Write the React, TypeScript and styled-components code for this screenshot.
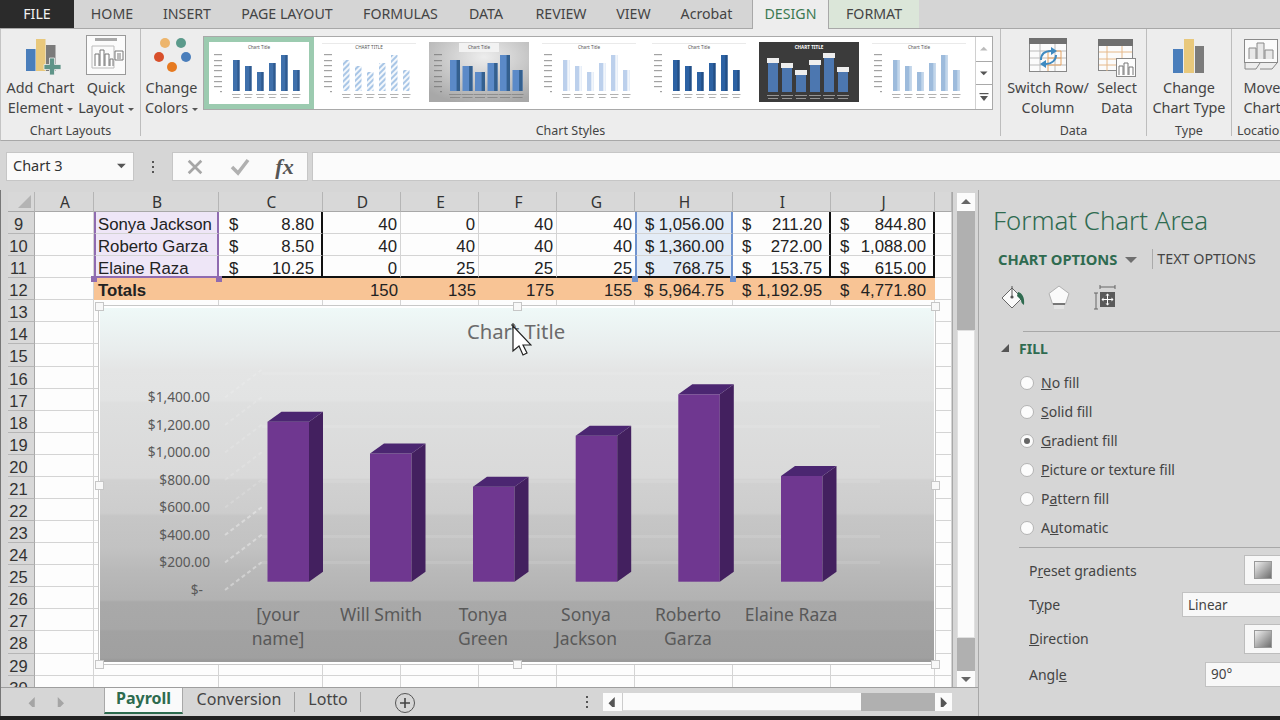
import React from "react";
import styled, { createGlobalStyle } from "styled-components";

const UI = `"Noto Sans", "Open Sans", sans-serif`;
const CELL = `"Liberation Sans", Arial, sans-serif`;

const Global = createGlobalStyle`
  html, body { margin: 0; padding: 0; overflow: hidden; background: #d6d6d6; }
  * { box-sizing: border-box; }
`;

const Root = styled.div`
  width: 1280px; height: 720px; display: flex; flex-direction: column; overflow: hidden;
  background: #d6d6d6; font-family: ${UI}; color: #444;
`;

/* ---------- tabs ---------- */
const TabBar = styled.div`
  height: 29px; flex: none; display: flex; align-items: stretch; background: #d5d5d5;
  border-bottom: 1px solid #a8a8a8;
`;
const Tab = styled.div<{ $w: number; $kind?: "file" | "design" | "format" }>`
  width: ${(p) => p.$w}px; flex: none; display: flex; align-items: center; justify-content: center;
  font-size: 14.2px; white-space: nowrap; color: #444; padding-bottom: 2px;
  ${(p) => p.$kind === "file" && "background:#2b2b2b;color:#f2f2f2;"}
  ${(p) => p.$kind === "design" && "background:#ededed;color:#3c7a52;height:29px;border-left:1px solid #a8a8a8;border-right:1px solid #a8a8a8;margin-left:5px;"}
  ${(p) => p.$kind === "format" && "background:#dbe6d9;color:#444;"}
`;

/* ---------- ribbon ---------- */
const Ribbon = styled.div`
  height: 112px; flex: none; display: flex; background: #ededed; border-bottom: 1px solid #a8a8a8;
  border-left: 1px solid #c4c4c4; overflow: hidden;
`;
const Group = styled.div<{ $w: number; $last?: boolean }>`
  width: ${(p) => p.$w}px; flex: none; position: relative; display: flex; flex-direction: column;
  height: 107px;
  ${(p) => !p.$last && "border-right: 1px solid #bdbdbd;"}
`;
const GroupBody = styled.div<{ $pad?: number }>`
  height: 93px; flex: none; display: flex; align-items: flex-start; padding-left: ${(p) => p.$pad ?? 0}px;
`;
const GroupLabel = styled.div`
  height: 18px; flex: none; text-align: center; font-size: 12.5px; line-height: 18px; color: #444; white-space: nowrap;
`;
const RibbonBtn = styled.div<{ $w: number }>`
  width: ${(p) => p.$w}px; flex: none; display: flex; flex-direction: column; align-items: center;
`;
const BtnIcon = styled.div`
  height: 49px; display: flex; align-items: flex-start; justify-content: center; padding-top: 10px;
`;
const BtnLabel = styled.div`
  font-size: 14.4px; line-height: 20px; color: #444; text-align: center; white-space: nowrap;
`;
const Caret = styled.span`
  display: inline-block; width: 0; height: 0; margin-left: 4px; vertical-align: 2px;
  border-left: 3px solid transparent; border-right: 3px solid transparent; border-top: 3px solid #555;
`;
const Gallery = styled.div`
  margin: 7px 0 0 1px; width: 790px; height: 74px; display: flex; background: #fff;
  border: 1px solid #a9a9a9;
`;
const Thumb = styled.div<{ $sel?: boolean }>`
  width: 110px; height: 72px; flex: none; border: 5px solid ${(p) => (p.$sel ? "#9ccbb0" : "transparent")};
  display: flex; background: #fff;
`;
const GalleryScroll = styled.div`
  width: 17px; flex: none; margin-left: auto; display: flex; flex-direction: column; border-left: 1px solid #d0d0d0;
`;
const ScrollCell = styled.div<{ $h: number }>`
  height: ${(p) => p.$h}px; display: flex; align-items: center; justify-content: center;
  & + & { border-top: 1px solid #a9a9a9; }
`;

/* ---------- formula bar ---------- */
const FormulaBar = styled.div`
  height: 49px; flex: none; display: flex; align-items: flex-start; padding: 11px 0 0 6px; background: #d6d6d6;
`;
const NameBox = styled.div`
  width: 128px; height: 29px; background: #fafafa; border: 1px solid #c6c6c6; display: flex; align-items: center;
  justify-content: space-between; padding: 0 7px 3px 6px; font-size: 14.5px; color: #333;
`;
const Dots = styled.div`
  width: 38px; flex: none; display: flex; flex-direction: column; align-items: center; gap: 3px; padding-top: 9px;
  height: 29px;
`;
const Dot = styled.span`
  width: 2px; height: 2px; background: #555;
`;
const FxBox = styled.div`
  width: 136px; height: 29px; background: #fafafa; border: 1px solid #c6c6c6; display: grid;
  grid-template-columns: 44px 45px 45px; justify-items: center; align-items: center; flex: none;
`;
const Fx = styled.span`
  font-family: "Liberation Serif", serif; font-style: italic; font-weight: 700; font-size: 22px; line-height: 24px; color: #555;
`;
const FormulaInput = styled.div`
  flex: 1; height: 29px; margin-left: 4px; background: #fbfbfb; border: 1px solid #c6c6c6; border-right: none;
`;

/* ---------- main ---------- */
const Main = styled.div`
  flex: 1; min-height: 0; display: flex;
`;
const Work = styled.div`
  width: 979px; flex: none; display: flex; flex-direction: column; border-right: 1px solid #a8a8a8;
  border-left: 1px solid #777;
`;
const SheetRow = styled.div`
  height: 498px; flex: none; display: flex; padding: 2px 0 0 7px; position: relative; border-bottom: 1px solid #9e9e9e;
`;
const Grid = styled.div`
  width: 945px; height: 495px; flex: none; overflow: hidden; display: grid; background: #fdfdfd;
  grid-template-columns: 27px 59px 125px 104px 78px 78px 78px 78px 98px 98px 104px 17px;
  grid-template-rows: 20px;
  grid-auto-rows: 22.08px;
  border-right: 1px solid #a8a8a8;
`;
const Corner = styled.div`
  background: #d8d8d8; position: relative; border-bottom: 1px solid #a8a8a8; border-right: 1px solid #b5b5b5;
  &::after {
    content: ""; position: absolute; right: 3px; bottom: 3px; width: 0; height: 0;
    border-left: 13px solid transparent; border-bottom: 13px solid #b4b4b4;
  }
`;
const ColHead = styled.div`
  background: #d8d8d8; text-align: center; font-size: 15.5px; line-height: 20px; color: #333; padding-left: 2px;
  border-bottom: 1px solid #a8a8a8; border-right: 1px solid #b5b5b5;
`;
const RowHead = styled.div`
  background: #d8d8d8; text-align: center; font-family: ${CELL}; font-size: 16.5px; line-height: 24px; color: #333;
  padding-right: 5px;
  border-bottom: 1px solid #b5b5b5; border-right: 1px solid #a8a8a8; overflow: hidden;
`;
type Tone = "purple" | "blue" | "total";
const Cell = styled.div<{ $tone?: Tone; $r?: string; $b?: string; $l?: string; $right?: boolean; $bold?: boolean; $pad?: number; $lpad?: number }>`
  font-family: ${CELL}; font-size: 16.8px; line-height: 25px; color: #222; white-space: nowrap;
  display: flex; justify-content: ${(p) => (p.$right ? "flex-end" : "flex-start")};
  padding: 0 ${(p) => p.$pad ?? 3}px 0 ${(p) => p.$lpad ?? (p.$right ? 2 : 4)}px;
  font-weight: ${(p) => (p.$bold ? 700 : 400)};
  background: ${(p) => (p.$tone === "purple" ? "#eee6f7" : p.$tone === "blue" ? "#e4ecf6" : p.$tone === "total" ? "#f8c495" : "transparent")};
  border-right: ${(p) => p.$r ?? (p.$tone === "total" ? "none" : "1px solid #d4d4d4")};
  border-bottom: ${(p) => p.$b ?? (p.$tone === "total" ? "none" : "1px solid #d4d4d4")};
  ${(p) => p.$l && `border-left: ${p.$l};`}
`;
const Money = styled(Cell)`
  justify-content: space-between;
  padding: 0 ${(p) => p.$pad ?? 9}px 0 ${(p) => p.$lpad ?? 9}px;
`;
const Handle = styled.span<{ $x: number; $y: number; $c: string }>`
  position: absolute; left: ${(p) => p.$x - 3}px; top: ${(p) => p.$y - 3}px; width: 6px; height: 6px; background: ${(p) => p.$c}; z-index: 3;
`;

const VScroll = styled.div`
  width: 26px; flex: none; padding: 1px 4px 0 4px; display: flex; flex-direction: column; height: 495px;
`;
const SBtn = styled.div<{ $w?: number; $h?: number }>`
  width: ${(p) => (p.$w ? p.$w + "px" : "100%")}; height: ${(p) => (p.$h ? p.$h + "px" : "100%")}; flex: none;
  background: #fbfbfb; display: flex; align-items: center; justify-content: center;
`;
const VTrack = styled.div`
  flex: 1; background: #b0b0b0; display: flex; flex-direction: column; padding-top: 119px;
`;
const VThumb = styled.div`
  width: 100%; height: 308px; background: #fbfbfb; border: 1px solid #e0e0e0;
`;

/* ---------- chart ---------- */
const ChartFrame = styled.div`
  position: absolute; left: 97px; top: 115px; width: 838px; height: 360px; z-index: 2;
  border: 1px solid #c8c8c8; padding: 2px 1px;
  background: #fff;
`;
const ChartFill = styled.div`
  width: 100%; height: 100%; display: flex;
  background: linear-gradient(180deg, #eff9f8 0, #e8ecec 44px, #e4e5e5 62px, #e2e3e3 92px, #dedfdf 95px, #d9d9d9 170px,
    #d1d1d1 172px, #cdcdcd 205px, #c6c6c6 208px, #c2c2c2 240px, #b9b9b9 262px, #b2b2b2 292px, #a9a9a9 294px, #a7a7a7 321px, #a2a2a2 323px, #a0a0a0 350px, #9a9a9a 352px);
`;
const ChartHandle = styled.span<{ $x: number; $y: number }>`
  position: absolute; left: ${(p) => p.$x}%; top: ${(p) => p.$y}%; width: 9px; height: 9px; margin: -4.5px 0 0 -4.5px;
  background: #f8f8f8; border: 1px solid #c6c6c6;
`;
const ChartSvg = styled.svg`
  display: block; width: 100%; height: 100%; font-family: ${UI};
`;
const CursorSvg = styled.svg`
  position: absolute; left: 411px; top: 17px; z-index: 4;
`;

/* ---------- sheet tabs ---------- */
const Strip = styled.div`
  height: 28px; flex: none; display: flex; align-items: stretch; background: #d6d6d6; position: relative;
`;
const NavArrows = styled.div`
  width: 103px; flex: none; display: flex; align-items: center; padding-left: 25px; gap: 15px;
`;
const SheetTab = styled.div<{ $w: number; $active?: boolean; $sep?: boolean }>`
  width: ${(p) => p.$w}px; flex: none; display: flex; align-items: center; justify-content: center;
  font-size: 16px; padding-bottom: 4px; color: #444; height: 26px; position: relative;
  ${(p) => p.$active && "background:#fafafa;color:#2d6b4e;font-weight:700;border-bottom:2px solid #2d6b4e;border-left:1px solid #a8a8a8;border-right:1px solid #a8a8a8;"}
  ${(p) => p.$sep && "&::after{content:'';position:absolute;right:0;top:4px;height:20px;width:1px;background:#a0a0a0;}"}
`;
const AddSheet = styled.div`
  width: 20px; height: 20px; margin: 5px 0 0 34px; flex: none; border-radius: 50%; border: 1.5px solid #555;
  display: flex; align-items: center; justify-content: center;
`;
const HScroll = styled.div`
  position: absolute; left: 602px; top: 5px; width: 349px; height: 18px; display: flex;
`;
const HThumb = styled.div`
  width: 239px; height: 18px; background: #fbfbfb; border-left: 1px solid #ccc; border-bottom: 1px solid #ddd;
`;
const HTrack = styled.div`
  flex: 1; background: #b0b0b0;
`;
const StripDots = styled.div`
  position: absolute; left: 585px; top: 8px; display: flex; flex-direction: column; gap: 3px;
`;

/* ---------- pane ---------- */
const Pane = styled.div`
  flex: 1; min-width: 0; padding: 15px 0 0 14px; background: #d6d6d6; overflow: hidden; position: relative;
`;
const PaneTitle = styled.div`
  font-size: 25.8px; font-weight: 300; color: #2f6b50; line-height: 30px; white-space: nowrap;
`;
const OptionTabs = styled.div`
  margin: 14px 0 0 5px; display: flex; align-items: center; height: 20px; white-space: nowrap;
`;
const OptionOn = styled.span`
  font-size: 14.7px; font-weight: 700; color: #2f6b50;
`;
const OptionCaret = styled.span`
  width: 0; height: 0; margin: 2px 15px 0 8px; border-left: 6px solid transparent; border-right: 6px solid transparent; border-top: 6px solid #6f6f6f;
`;
const OptionOff = styled.span`
  font-size: 14.3px; color: #444; border-left: 1px solid #aaa; padding-left: 4px; line-height: 20px;
`;
const IconRow = styled.div`
  margin: 16px 0 0 8px; display: flex; gap: 22px; height: 26px; align-items: center;
`;
const PaneRule = styled.div<{ $ml: number; $mt: number }>`
  margin: ${(p) => p.$mt}px 0 0 ${(p) => p.$ml}px; height: 1px; background: #a8a8a8;
`;
const SectionHead = styled.div`
  margin: 6px 0 0 8px; display: flex; align-items: center; gap: 10px; height: 20px;
  font-size: 14px; font-weight: 700; color: #2f6b50;
`;
const SectionTri = styled.span`
  width: 0; height: 0; border-bottom: 8px solid #555; border-left: 8px solid transparent;
`;
const RadioList = styled.div`
  margin: 10px 0 0 27px; display: flex; flex-direction: column;
`;
const RadioRow = styled.div`
  height: 29px; display: flex; align-items: center; gap: 7px; font-size: 14px; color: #444; white-space: nowrap;
`;
const Radio = styled.span<{ $on?: boolean }>`
  width: 14px; height: 14px; border-radius: 50%; flex: none; background: #fcfcfc; border: 1px solid #b4b4b4;
  display: flex; align-items: center; justify-content: center;
  ${(p) => p.$on && "&::after{content:'';width:6px;height:6px;border-radius:50%;background:#666;}"}
`;
const PropRow = styled.div<{ $h: number }>`
  height: ${(p) => p.$h}px; padding-left: 36px; display: flex; align-items: center; justify-content: space-between;
  font-size: 14px; color: #444; white-space: nowrap;
`;
const SwatchBtn = styled.div`
  width: 36px; height: 30px; background: #f7f7f7; border: 1px solid #bdbdbd; border-right: none; display: flex; align-items: center;
  padding-left: 9px; flex: none;
`;
const Swatch = styled.span`
  width: 18px; height: 18px; border: 1px solid #999; background: linear-gradient(135deg, #f0f0f0, #6e6e6e);
`;
const SelectBox = styled.div<{ $w: number }>`
  width: ${(p) => p.$w}px; height: 25px; flex: none; background: #f8f8f8; border: 1px solid #c2c2c2; border-right: none;
  display: flex; align-items: center; padding-left: 5px; font-size: 13.5px; color: #444;
`;
const BottomBar = styled.div`
  height: 4px; flex: none; background: #222;
`;

/* ---------- icons ---------- */
const AddChartIcon = () => (
  <svg width="36" height="37" viewBox="26 39 36 37" style={{ marginLeft: 7 }}>
    <rect x="26" y="49" width="9.5" height="22" fill="#4a7ebb" />
    <rect x="36" y="39" width="9.5" height="32" fill="#e8c87c" />
    <rect x="46" y="45" width="9.5" height="26" fill="#7b7b7b" />
    <path d="M49.5 58h5v6.5H61v5h-6.5V75h-5v-5.5H44v-5h5.5z" fill="#5f9488" stroke="#ededed" strokeWidth="0.8" />
  </svg>
);
const QuickIcon = () => (
  <svg width="40" height="40" viewBox="0 0 40 40" style={{ marginTop: -4 }}>
    <rect x="0.5" y="0.5" width="39" height="39" fill="#fbfbfb" stroke="#9a9a9a" />
    <rect x="9" y="3" width="22" height="3" fill="#a9a9a9" />
    <path d="M6 11h22v22H6z" fill="none" stroke="#bbb" />
    <path d="M9 31V19h4v12M14 31V15h4v16M19 31V19h4v12M24 31V24h3v7" fill="#fff" stroke="#777" />
    <path d="M29 16h8v9h-8z" fill="#fff" stroke="#777" />
    <path d="M31 19h4M31 21h4M31 23h4" stroke="#777" />
  </svg>
);
const ColorsIcon = () => (
  <svg width="40" height="40" viewBox="0 0 40 40" style={{ marginTop: -1, marginLeft: 2 }}>
    <circle cx="12" cy="5" r="5" fill="#edb56c" />
    <circle cx="28" cy="5" r="5" fill="#5b9a8b" />
    <circle cx="6" cy="19" r="5" fill="#d8502b" />
    <circle cx="33" cy="19" r="5" fill="#4a7ebb" />
    <circle cx="19" cy="29" r="5" fill="#e67a20" />
  </svg>
);
const SwitchIcon = () => (
  <svg width="38" height="34" viewBox="0 0 38 34" style={{ marginTop: -1 }}>
    <rect x="0.5" y="0.5" width="37" height="33" fill="#fbfbfb" stroke="#888" />
    <rect x="0" y="0" width="38" height="6" fill="#707070" />
    <path d="M11 6v27M26 6v27M1 13h36M1 20h36M1 27h36" stroke="#bbb" />
    <path d="M19 13v20M19 13h13M19 20h13M19 27h13M32 13v14" stroke="#e6a565" fill="none" />
    <path d="M12 22c0-6 4-9 10-9" fill="none" stroke="#3f8ac0" strokeWidth="2" />
    <path d="M22 9l6 4-6 4z" fill="#3f8ac0" />
    <path d="M27 17c0 5-4 9-10 9" fill="none" stroke="#3f8ac0" strokeWidth="2" />
    <path d="M17 22l-6 4 6 4z" fill="#3f8ac0" />
  </svg>
);
const SelectIcon = () => (
  <svg width="38" height="38" viewBox="0 0 38 38">
    <rect x="0.5" y="0.5" width="34" height="31" fill="#fbfbfb" stroke="#888" />
    <rect x="0" y="0" width="35" height="7" fill="#707070" />
    <path d="M9 7v25M24 7v25M1 13h33M1 20h33M1 26h33" stroke="#e6b98a" />
    <rect x="18.5" y="19.5" width="19" height="18" fill="#fdfdfd" stroke="#888" />
    <path d="M21 36v-9h4v9M26 36V24h4v12M31 36v-8h4v8" fill="#fff" stroke="#777" />
  </svg>
);
const TypeIcon = () => (
  <svg width="32" height="34" viewBox="0 0 32 34">
    <rect x="0" y="10" width="10" height="24" fill="#4a7ebb" />
    <rect x="11" y="0" width="10" height="34" fill="#e8c87c" />
    <rect x="22" y="7" width="9" height="27" fill="#7b7b7b" />
  </svg>
);
const MoveIcon = () => (
  <svg width="36" height="34" viewBox="0 0 36 34">
    <rect x="0.5" y="0.5" width="33" height="23" fill="#fbfbfb" stroke="#8a8a8a" />
    <path d="M5 20V9h7v11M13 20V4h7v16M21 20V11h8v9" fill="#e8e8e8" stroke="#888" />
    <path d="M1 24v6h11l4-6M16 30h12l5-6" fill="none" stroke="#888" />
  </svg>
);
const BucketIcon = () => (
  <svg width="24" height="24" viewBox="0 0 24 24">
    <path d="M11 2L1 12l10 10 10-10z" fill="#fafafa" stroke="#666" />
    <path d="M11 0v10" stroke="#555" />
    <circle cx="11" cy="11" r="1.6" fill="#555" />
    <path d="M17 6c4 1 7 5 6 13-2-1-3-3-3-5l-4-4z" fill="#2f6b50" />
  </svg>
);
const PentagonIcon = () => (
  <svg width="24" height="26" viewBox="0 0 24 26">
    <path d="M12 1l10 7.5-3.5 10.5H5.5L2 8.5z" fill="#fafafa" stroke="#b0b0b0" />
    <rect x="6" y="18" width="12" height="2" fill="#777" />
    <rect x="7" y="20" width="10" height="4" fill="#e3e3e3" />
  </svg>
);
const SizeIcon = () => (
  <svg width="24" height="26" viewBox="0 0 24 26">
    <path d="M7 2h15M7 0v4M22 0v4M1 8h4M1 24h4M3 8v16" stroke="#666" fill="none" />
    <rect x="7" y="7" width="15" height="15" fill="#5a5a5a" />
    <path d="M14.5 10v9M10 14.5h9" stroke="#fff" strokeWidth="1" />
    <path d="M14.5 8.5l-2 2h4zM14.5 20.5l-2-2h4zM8.5 14.5l2-2v4zM20.5 14.5l-2-2v4z" fill="#fff" />
  </svg>
);
const MoreIcon = () => (
  <svg width="10" height="10" viewBox="0 0 10 10">
    <rect x="0.5" y="1" width="9" height="1.2" fill="#555" />
    <polygon points="1,4 9,4 5,9" fill="#555" />
  </svg>
);
const Tri = ({ d, c = "#666", s = 4 }: { d: "u" | "d" | "l" | "r"; c?: string; s?: number }) => {
  const pts = { u: "0,6 5,1 10,6", d: "0,2 10,2 5,7", l: "7,0 7,10 2,5", r: "3,0 3,10 8,5" }[d];
  return (
    <svg width={s * 2.5} height={s * 2} viewBox="0 0 10 8" preserveAspectRatio="none">
      <polygon points={pts} fill={c} />
    </svg>
  );
};

/* ---------- thumbnails ---------- */
type ThumbStyle = {
  bg: string; bar: string; side?: string; hatch?: boolean; title: string; dark?: boolean; titleBox?: boolean;
  rule?: boolean; tags?: boolean; shaded?: boolean; x0?: number; pitch?: number; barW?: number; tops?: number[]; base?: number; ticks?: boolean;
};
const TOPS = [18, 24, 30, 21, 13, 28];
const MiniChart = ({ id, s }: { id: string; s: ThumbStyle }) => {
  const ink = s.dark ? "#eee" : "#666";
  const x0 = s.x0 ?? 24;
  const pitch = s.pitch ?? 12;
  const bw = s.barW ?? 6.5;
  const base = s.base ?? 49;
  const tops = s.tops ?? TOPS;
  return (
    <svg width="100" height="62" viewBox="0 0 100 62" style={{ display: "block" }}>
      <defs>
        <pattern id={id} width="4" height="4" patternUnits="userSpaceOnUse" patternTransform="rotate(45)">
          <rect width="4" height="4" fill="#f4f8fc" />
          <rect width="2" height="4" fill="#a9c6e6" />
        </pattern>
        <radialGradient id={`${id}g`} cx="0.55" cy="0.25" r="0.8">
          <stop offset="0" stopColor="#ededed" />
          <stop offset="1" stopColor="#a8a8a8" />
        </radialGradient>
      </defs>
      <rect width="100" height={s.dark || s.shaded ? 60 : 62} fill={s.shaded ? `url(#${id}g)` : s.bg} />
      {s.rule && <rect x="3" y="1" width="94" height="0.6" fill="#ddd" />}
      {s.titleBox && <rect x="30" y="1" width="40" height="9" fill="#f2f2f2" />}
      <text x="50" y="7" textAnchor="middle" fontSize="4.6" fill={s.dark ? "#fff" : "#555"} fontFamily={UI} fontWeight={s.dark ? 700 : 400}>{s.title}</text>
      {s.ticks !== false && [12, 18, 23, 28, 34, 39, 44, 49].map((y) => <rect key={y} x={y === 49 ? 11 : 5} y={y} width={y === 49 ? 2 : 8} height="1.2" fill={ink} opacity="0.6" />)}
      {tops.map((t, i) => {
        const x = x0 + i * pitch;
        return (
          <g key={i}>
            <rect x={x} y={t} width={bw} height={base - t} fill={s.hatch ? `url(#${id})` : s.bar} />
            {s.side && <rect x={x + bw * 0.66} y={t} width={bw * 0.34} height={base - t} fill={s.side} />}
            {s.tags && <rect x={x - 1} y={t - 5} width={bw + 2} height="5" fill="#eee" />}
            <rect x={x - 1} y={base + 3} width={bw + 2} height="1" fill={ink} opacity="0.5" />
            <rect x={x} y={base + 6} width={bw} height="1" fill={ink} opacity="0.5" />
          </g>
        );
      })}
    </svg>
  );
};
const THUMBS: ThumbStyle[] = [
  { bg: "#fff", bar: "#3f70ab", side: "#2f5a8f", title: "Chart Title" },
  { bg: "#fff", bar: "#a9c6e6", hatch: true, title: "CHART TITLE", rule: true },
  { bg: "#bdbdbd", bar: "#5b8ac8", side: "#34608f", title: "Chart Title", titleBox: true, shaded: true, x0: 21, pitch: 12.5, barW: 10 },
  { bg: "#fff", bar: "#bcd0ec", side: "#f2f6fb", title: "Chart Title", rule: true },
  { bg: "#fff", bar: "#2c62a4", side: "#234f86", title: "Chart Title", rule: true },
  { bg: "#3b3b3b", bar: "#4c77b0", title: "CHART TITLE", dark: true, tags: true, x0: 9, pitch: 14, barW: 10, tops: [21, 26, 33, 23, 16, 30], base: 50, ticks: false },
  { bg: "#fff", bar: "#9dbbdc", side: "#c1d5ea", title: "Chart Title", rule: true },
];

/* ---------- sheet data ---------- */
const COLS = ["A", "B", "C", "D", "E", "F", "G", "H", "I", "J"];
const BLK = "2px solid #111";
const PUR = "2px solid #8f6bb0";
const BLU = "2px solid #6f93cf";

type R = { n: number; name: string; c: string; d: string; e: string; f: string; g: string; h: string; i: string; j: string };
const DATA: R[] = [
  { n: 9, name: "Sonya Jackson", c: "8.80", d: "40", e: "0", f: "40", g: "40", h: "1,056.00", i: "211.20", j: "844.80" },
  { n: 10, name: "Roberto Garza", c: "8.50", d: "40", e: "40", f: "40", g: "40", h: "1,360.00", i: "272.00", j: "1,088.00" },
  { n: 11, name: "Elaine Raza", c: "10.25", d: "0", e: "25", f: "25", g: "25", h: "768.75", i: "153.75", j: "615.00" },
];

const DataRow = ({ r }: { r: R }) => {
  const last = r.n === 11;
  const b = last ? BLK : undefined;
  return (
    <>
      <RowHead>{r.n}</RowHead>
      <Cell />
      <Cell $tone="purple" $l={PUR} $r={PUR} $b={last ? PUR : undefined} $pad={0} $lpad={2}>{r.name}</Cell>
      <Money $r={BLK} $b={b} $pad={7} $lpad={10}><span>$</span><span>{r.c}</span></Money>
      <Cell $right $b={b}>{r.d}</Cell>
      <Cell $right $b={b}>{r.e}</Cell>
      <Cell $right $b={b}>{r.f}</Cell>
      <Cell $right $b={b} $r="none">{r.g}</Cell>
      <Money $tone="blue" $l={BLU} $r={BLU} $b={b} $pad={7} $lpad={8}><span>$</span><span>{r.h}</span></Money>
      <Money $r={BLK} $b={b} $pad={7}><span>$</span><span>{r.i}</span></Money>
      <Money $r={BLK} $b={b} $pad={7}><span>$</span><span>{r.j}</span></Money>
      <Cell />
    </>
  );
};
const TotalRow = () => (
  <>
    <RowHead>12</RowHead>
    <Cell />
    <Cell $tone="total" $bold>Totals</Cell>
    <Cell $tone="total" />
    <Cell $tone="total" $right>150</Cell>
    <Cell $tone="total" $right>135</Cell>
    <Cell $tone="total" $right>175</Cell>
    <Cell $tone="total" $right>155</Cell>
    <Money $tone="total"><span>$</span><span>5,964.75</span></Money>
    <Money $tone="total"><span>$</span><span>1,192.95</span></Money>
    <Money $tone="total"><span>$</span><span>4,771.80</span></Money>
    <Cell />
  </>
);
const EmptyRow = ({ n }: { n: number }) => (
  <>
    <RowHead>{n}</RowHead>
    {Array.from({ length: 11 }).map((_, i) => <Cell key={i} />)}
  </>
);

/* ---------- chart drawing ---------- */
const BARS = [
  { x: 267.5, top: 421.7 },
  { x: 370, top: 453.5 },
  { x: 473, top: 486.7 },
  { x: 575.7, top: 435.7 },
  { x: 678.3, top: 394.3 },
  { x: 781, top: 476 },
];
const BASE = 581.7;
const W = 41.5;
const DX = 14;
const DY = 10;
const YLABELS: [string, number, number][] = [
  ["$1,400.00", 397, 210], ["$1,200.00", 425, 210], ["$1,000.00", 452, 210], ["$800.00", 480, 210],
  ["$600.00", 507, 210], ["$400.00", 535, 210], ["$200.00", 562, 210], ["$-", 590, 203],
];
const XLABELS: [number, string, string?][] = [
  [278, "[your", "name]"], [381, "Will Smith"], [483, "Tonya", "Green"], [586, "Sonya", "Jackson"], [688, "Roberto", "Garza"], [791, "Elaine Raza"],
];

const ChartDrawing = () => (
  <ChartSvg viewBox="100 308 834 354" preserveAspectRatio="none">
    {[372, 425, 480, 535, 561].map((y) => (
      <rect key={y} x="262" y={y} width="618" height="3" fill="#fff" opacity="0.1" />
    ))}
    {[0, 1, 2, 3, 4, 5, 6, 7].map((i) => {
      const y = 590 - i * 27.5;
      return (
        <path key={i} d={`M225 ${y}L262 ${y - 28}`} stroke="#fff" strokeWidth="2" strokeDasharray="4 3" opacity={i < 3 ? 0.35 : 0.15} fill="none" />
      );
    })}
    <text x="516" y="339" textAnchor="middle" fontSize="20.3" fill="#6b6b6b">Chart Title</text>
    {YLABELS.map(([t, y, x]) => (
      <text key={t} x={x} y={y + 5} textAnchor="end" fontSize="13.7" fill="#595959">{t}</text>
    ))}
    {BARS.map((b) => (
      <g key={b.x}>
        <rect x={b.x} y={b.top} width={W} height={BASE - b.top} fill="#6f3790" />
        <polygon points={`${b.x + W},${b.top} ${b.x + W + DX},${b.top - DY} ${b.x + W + DX},${BASE - DY} ${b.x + W},${BASE}`} fill="#43205f" />
        <polygon points={`${b.x},${b.top} ${b.x + DX},${b.top - DY} ${b.x + W + DX},${b.top - DY} ${b.x + W},${b.top}`} fill="#4b2671" />
      </g>
    ))}
    {XLABELS.map(([x, a, b]) => (
      <g key={a} fontSize="17.5" fill="#595959" textAnchor="middle">
        <text x={x} y="621">{a}</text>
        {b && <text x={x} y="645">{b}</text>}
      </g>
    ))}
  </ChartSvg>
);

const HANDLES: [number, number][] = [[0, 0], [50, 0], [100, 0], [0, 50], [100, 50], [0, 100], [50, 100], [100, 100]];

export default function App() {
  return (
    <Root>
      <Global />
      <TabBar>
        <Tab $w={74} $kind="file">FILE</Tab>
        <Tab $w={76}>HOME</Tab>
        <Tab $w={74}>INSERT</Tab>
        <Tab $w={126}>PAGE LAYOUT</Tab>
        <Tab $w={101}>FORMULAS</Tab>
        <Tab $w={70}>DATA</Tab>
        <Tab $w={80}>REVIEW</Tab>
        <Tab $w={65}>VIEW</Tab>
        <Tab $w={81}>Acrobat</Tab>
        <Tab $w={77} $kind="design">DESIGN</Tab>
        <Tab $w={90} $kind="format">FORMAT</Tab>
      </TabBar>

      <Ribbon>
        <Group $w={140}>
          <GroupBody>
            <RibbonBtn $w={79}>
              <BtnIcon><AddChartIcon /></BtnIcon>
              <BtnLabel>Add Chart<br />Element<Caret /></BtnLabel>
            </RibbonBtn>
            <RibbonBtn $w={52}>
              <BtnIcon><QuickIcon /></BtnIcon>
              <BtnLabel>Quick<br />Layout<Caret /></BtnLabel>
            </RibbonBtn>
          </GroupBody>
          <GroupLabel>Chart Layouts</GroupLabel>
        </Group>
        <Group $w={860}>
          <GroupBody>
            <RibbonBtn $w={61}>
              <BtnIcon><ColorsIcon /></BtnIcon>
              <BtnLabel>Change<br />Colors<Caret /></BtnLabel>
            </RibbonBtn>
            <Gallery>
              {THUMBS.map((s, i) => (
                <Thumb key={i} $sel={i === 0}><MiniChart id={`h${i}`} s={s} /></Thumb>
              ))}
              <GalleryScroll>
                <ScrollCell $h={24}><Tri d="u" c="#bbb" s={3} /></ScrollCell>
                <ScrollCell $h={23}><Tri d="d" c="#555" s={3} /></ScrollCell>
                <ScrollCell $h={25}><MoreIcon /></ScrollCell>
              </GalleryScroll>
            </Gallery>
          </GroupBody>
          <GroupLabel>Chart Styles</GroupLabel>
        </Group>
        <Group $w={146}>
          <GroupBody $pad={2}>
            <RibbonBtn $w={90}>
              <BtnIcon><SwitchIcon /></BtnIcon>
              <BtnLabel>Switch Row/<br />Column</BtnLabel>
            </RibbonBtn>
            <RibbonBtn $w={48}>
              <BtnIcon><SelectIcon /></BtnIcon>
              <BtnLabel>Select<br />Data</BtnLabel>
            </RibbonBtn>
          </GroupBody>
          <GroupLabel>Data</GroupLabel>
        </Group>
        <Group $w={85}>
          <GroupBody>
            <RibbonBtn $w={84}>
              <BtnIcon><TypeIcon /></BtnIcon>
              <BtnLabel>Change<br />Chart Type</BtnLabel>
            </RibbonBtn>
          </GroupBody>
          <GroupLabel>Type</GroupLabel>
        </Group>
        <Group $w={60} $last>
          <GroupBody>
            <RibbonBtn $w={60}>
              <BtnIcon><MoveIcon /></BtnIcon>
              <BtnLabel>Move<br />Chart</BtnLabel>
            </RibbonBtn>
          </GroupBody>
          <GroupLabel>Location</GroupLabel>
        </Group>
      </Ribbon>

      <FormulaBar>
        <NameBox>Chart 3<Tri d="d" c="#555" s={3.5} /></NameBox>
        <Dots><Dot /><Dot /><Dot /></Dots>
        <FxBox>
          <svg width="18" height="18" viewBox="0 0 20 20"><path d="M3 3l14 14M17 3L3 17" stroke="#a6a6a6" strokeWidth="3" /></svg>
          <svg width="20" height="20" viewBox="0 0 20 20"><path d="M2 10l6 6L18 3" fill="none" stroke="#b0b0b0" strokeWidth="3.5" /></svg>
          <Fx>fx</Fx>
        </FxBox>
        <FormulaInput />
      </FormulaBar>

      <Main>
        <Work>
          <SheetRow>
            <Grid>
              <Corner />
              {COLS.map((c) => <ColHead key={c}>{c}</ColHead>)}
              <ColHead />
              {DATA.map((r) => <DataRow key={r.n} r={r} />)}
              <TotalRow />
              {Array.from({ length: 18 }).map((_, i) => <EmptyRow key={i} n={13 + i} />)}
            </Grid>
            <VScroll>
              <SBtn $h={18}><Tri d="u" c="#666" /></SBtn>
              <VTrack><VThumb /></VTrack>
              <SBtn $h={16}><Tri d="d" c="#666" /></SBtn>
            </VScroll>
            <Handle $x={93} $y={89} $c="#8f6bb0" />
            <Handle $x={218} $y={89} $c="#8f6bb0" />
            <Handle $x={634} $y={89} $c="#6f93cf" />
            <Handle $x={732} $y={89} $c="#6f93cf" />
            <ChartFrame>
              <ChartFill><ChartDrawing /></ChartFill>
              {HANDLES.map(([x, y]) => <ChartHandle key={`${x}-${y}`} $x={x} $y={y} />)}
              <CursorSvg width="22" height="34" viewBox="0 0 22 34">
                <path d="M3 3v25l6-5 4 9 4-2-4-8h8z" fill="#fff" stroke="#222" strokeWidth="1.2" />
                <path d="M3 0v5M1 2h4" stroke="#222" />
              </CursorSvg>
            </ChartFrame>
          </SheetRow>
          <Strip>
            <NavArrows>
              <Tri d="l" c="#a5a5a5" s={5} />
              <Tri d="r" c="#a5a5a5" s={5} />
            </NavArrows>
            <SheetTab $w={79} $active>Payroll</SheetTab>
            <SheetTab $w={112} $sep>Conversion</SheetTab>
            <SheetTab $w={66} $sep>Lotto</SheetTab>
            <AddSheet>
              <svg width="12" height="12" viewBox="0 0 12 12"><path d="M6 1v10M1 6h10" stroke="#444" strokeWidth="1.6" /></svg>
            </AddSheet>
            <StripDots><Dot /><Dot /><Dot /></StripDots>
            <HScroll>
              <SBtn $w={19} $h={18}><Tri d="l" c="#555" s={5} /></SBtn>
              <HThumb />
              <HTrack />
              <SBtn $w={17} $h={18}><Tri d="r" c="#555" s={5} /></SBtn>
            </HScroll>
          </Strip>
        </Work>

        <Pane>
          <PaneTitle>Format Chart Area</PaneTitle>
          <OptionTabs>
            <OptionOn>CHART OPTIONS</OptionOn>
            <OptionCaret />
            <OptionOff>TEXT OPTIONS</OptionOff>
          </OptionTabs>
          <IconRow>
            <BucketIcon />
            <PentagonIcon />
            <SizeIcon />
          </IconRow>
          <PaneRule $ml={30} $mt={20} />
          <SectionHead><SectionTri />FILL</SectionHead>
          <RadioList>
            <RadioRow><Radio /><span><u>N</u>o fill</span></RadioRow>
            <RadioRow><Radio /><span><u>S</u>olid fill</span></RadioRow>
            <RadioRow><Radio $on /><span><u>G</u>radient fill</span></RadioRow>
            <RadioRow><Radio /><span><u>P</u>icture or texture fill</span></RadioRow>
            <RadioRow><Radio /><span>P<u>a</u>ttern fill</span></RadioRow>
            <RadioRow><Radio /><span>A<u>u</u>tomatic</span></RadioRow>
          </RadioList>
          <PaneRule $ml={26} $mt={5} />
          <PropRow $h={44}><span>P<u>r</u>eset gradients</span><SwatchBtn><Swatch /></SwatchBtn></PropRow>
          <PropRow $h={25}><span>T<u>y</u>pe</span><SelectBox $w={98}>Linear</SelectBox></PropRow>
          <PropRow $h={43}><span><u>D</u>irection</span><SwatchBtn><Swatch /></SwatchBtn></PropRow>
          <PropRow $h={28}><span>Angl<u>e</u></span><SelectBox $w={75}>90°</SelectBox></PropRow>
        </Pane>
      </Main>
      <BottomBar />
    </Root>
  );
}
